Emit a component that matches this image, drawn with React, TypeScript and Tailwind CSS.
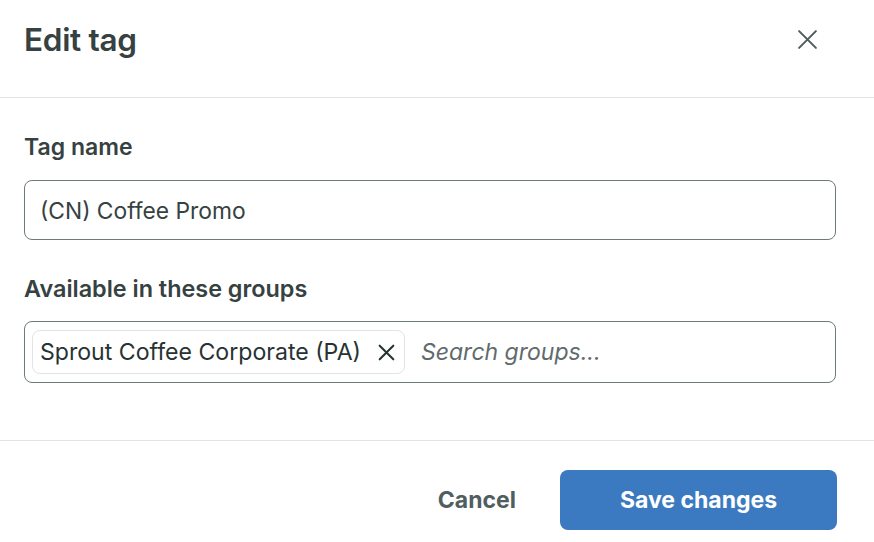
import React, { useState } from 'react';

const font = { fontFamily: 'Inter, "Noto Sans", sans-serif' };

const CloseIcon = ({ className }: { className?: string }) => (
  <svg viewBox="0 0 20 20" fill="none" stroke="currentColor" strokeLinecap="round" className={className} aria-hidden="true">
    <path d="M2 2 L18 18 M18 2 L2 18" />
  </svg>
);

export default function App() {
  const [name, setName] = useState('(CN) Coffee Promo');
  const [groups, setGroups] = useState<string[]>(['Sprout Coffee Corporate (PA)']);

  return (
    <div className="w-[874px] h-[542px] bg-white flex flex-col text-[#364141]" style={font}>
      {/* Header */}
      <div className="h-[98px] flex items-center justify-between pl-6 pr-[56px] border-b border-[#e1e4e4]">
        <h1 className="text-[31.5px] font-semibold tracking-[-0.3px] pb-[18px]">Edit tag</h1>
        <button aria-label="Close" className="text-[#4f5b5c] pb-[18px]">
          <CloseIcon className="w-[21px] h-[21px] stroke-[1.9]" />
        </button>
      </div>

      {/* Body */}
      <div className="flex-1 px-6 pr-[38px] pt-[35px]">
        <label className="block text-[23px] font-semibold leading-[28px] mb-[19px]">Tag name</label>
        <input
          value={name}
          onChange={(e) => setName(e.target.value)}
          className="w-full h-[60px] rounded-[8px] border border-[#6e7979] px-[15px] text-[22.8px] text-[#364141] outline-none"
          style={font}
        />

        <label className="block text-[23.4px] font-semibold leading-[28px] mt-[35px] mb-[18px]">
          Available in these groups
        </label>
        <div className="w-full h-[62px] rounded-[8px] border border-[#6e7979] flex items-center gap-4 px-[7px]">
          {groups.map((g) => (
            <span
              key={g}
              className="h-[44px] flex items-center gap-[17px] rounded-[8px] border border-[#e1e4e4] pl-[7px] pr-[9px] text-[23.1px] text-[#273333]"
            >
              {g}
              <button
                aria-label={`Remove ${g}`}
                onClick={() => setGroups(groups.filter((x) => x !== g))}
                className="text-[#273333]"
              >
                <CloseIcon className="w-[17px] h-[17px] stroke-[2.4]" />
              </button>
            </span>
          ))}
          <input
            placeholder="Search groups..."
            className="flex-1 text-[23px] italic outline-none placeholder:text-[#5f6b6c]"
            style={font}
          />
        </div>
      </div>

      {/* Footer */}
      <div className="h-[102px] border-t border-[#e1e4e4] flex items-start justify-end gap-[44px] pr-[37px] pt-[29px]">
        <button className="h-[60px] text-[23px] font-bold text-[#515e5f]">Cancel</button>
        <button className="w-[277px] h-[60px] rounded-[8px] bg-[#3b7ac0] text-white text-[23px] font-bold">
          Save changes
        </button>
      </div>
    </div>
  );
}
